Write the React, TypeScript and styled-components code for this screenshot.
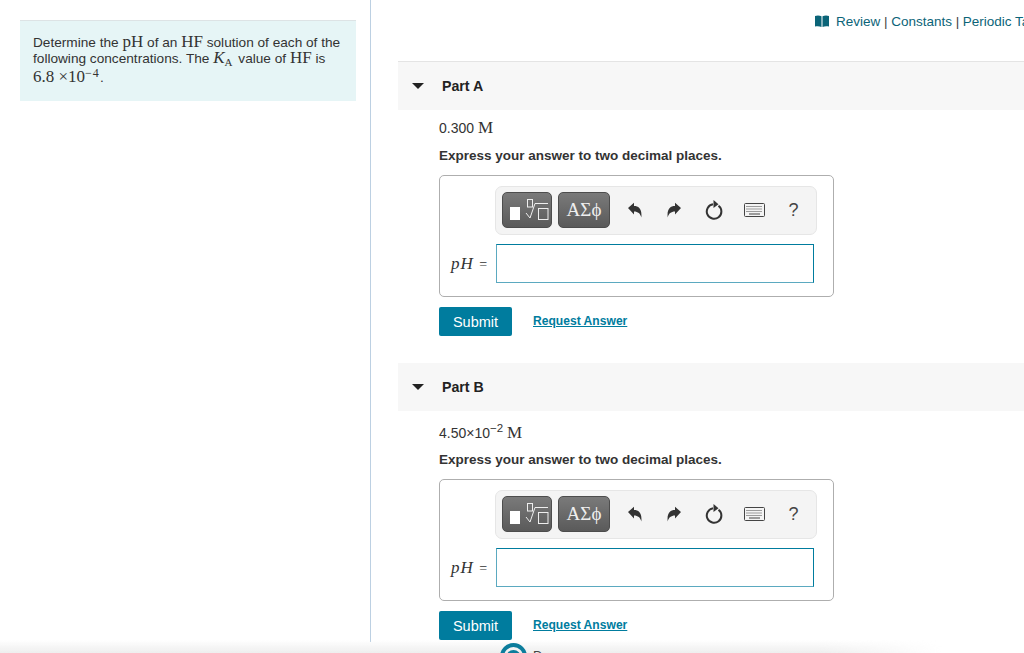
import React from "react";
import styled, { createGlobalStyle } from "styled-components";

const Global = createGlobalStyle`
  html, body { margin: 0; padding: 0; background: #fff; }
  body { font-family: "Liberation Sans", Arial, sans-serif; color: #333; overflow: hidden; }
`;
const Page = styled.div`
  position: relative;
  display: flex;
  width: 1024px;
  height: 653px;
  overflow: hidden;
`;
const LeftColumn = styled.aside`
  box-sizing: border-box;
  width: 371px;
  height: 642px;
  flex: none;
  padding: 20px 14px 0 20px;
  border-right: 1px solid #bcd0e2;
`;
const Intro = styled.div`
  box-sizing: border-box;
  height: 81px;
  padding: 14px 10px 0 13px;
  background: #e6f5f6;
  border-top: 1px solid #dde3e5;
  font-size: 13.65px;
  line-height: 16px;
`;
const IntroLine = styled.div<{ $gap?: number }>`
  height: 16px;
  white-space: nowrap;
  margin-top: ${(p) => p.$gap ?? 0}px;
`;
const Math = styled.span`
  font-family: "Liberation Serif", "Times New Roman", serif;
  font-size: 17px;
  line-height: 0;
`;
const MathItalic = styled(Math)`
  font-style: italic;
`;
const Sub = styled.sub`
  font-family: "Liberation Serif", serif;
  font-size: 11px;
  line-height: 0;
  vertical-align: -3px;
  margin-right: 2px;
`;
const Sup = styled.sup`
  font-family: "Liberation Serif", serif;
  font-size: 12px;
  line-height: 0;
  vertical-align: 5px;
  letter-spacing: 1px;
`;
const RightColumn = styled.main`
  flex: 1;
  min-width: 0;
  padding-left: 27px;
`;
const TopLinks = styled.nav`
  box-sizing: border-box;
  height: 61px;
  padding: 14px 0 0 417px;
  display: flex;
  align-items: flex-start;
  white-space: nowrap;
  font-size: 13.5px;
  line-height: 16px;
  color: #0b6478;
  overflow: hidden;
`;
const BookIcon = styled.svg`
  width: 14px;
  height: 12px;
  margin: 1px 7px 0 0;
  flex: none;
`;
const Divider = styled.span`
  color: #444;
  padding: 0 3.700px;
`;
const PartSection = styled.section<{ $first?: boolean }>`
  border-top: ${(p) => (p.$first ? "1px solid #e4e4e4" : "none")};
  margin-bottom: 27px;
`;
const PartHeader = styled.header`
  height: 48px;
  background: #f7f7f7;
  display: flex;
  align-items: center;
  padding-left: 14px;
  font-size: 14.2px;
  font-weight: 700;
  color: #222;
`;
const Caret = styled.span`
  width: 0;
  height: 0;
  border-left: 6px solid transparent;
  border-right: 6px solid transparent;
  border-top: 6px solid #222;
  margin-right: 18px;
`;
const PartBody = styled.div`
  padding-left: 41px;
`;
const Concentration = styled.div<{ $height: number; $pull: number }>`
  height: ${(p) => p.$height}px;
  margin-bottom: -${(p) => p.$pull}px;
  display: flex;
  align-items: flex-end;
  font-size: 14px;
  line-height: 20px;
  color: #333;
`;
const ConcentrationInner = styled.span`
  white-space: pre;
`;
const Exponent = styled.sup`
  font-size: 11.5px;
  line-height: 0;
  vertical-align: 6px;
`;
const Instruction = styled.p`
  margin: 0;
  padding-top: 9px;
  height: 27px;
  box-sizing: border-box;
  font-size: 13.5px;
  line-height: 18px;
  font-weight: 700;
  color: #333;
`;
const AnswerBox = styled.div`
  box-sizing: border-box;
  width: 395px;
  height: 122px;
  margin-top: 10px;
  padding: 10px 19px 0 11px;
  border: 1px solid #aeaeae;
  border-radius: 5px;
`;
const Toolbar = styled.div`
  box-sizing: border-box;
  width: 322px;
  height: 49px;
  margin-left: 44px;
  padding: 5px 0 0 6px;
  display: flex;
  align-items: flex-start;
  background: #f4f4f4;
  border: 1px solid #e6e6e6;
  border-radius: 7px;
`;
const TemplateButton = styled.div<{ $width: number }>`
  box-sizing: border-box;
  width: ${(p) => p.$width}px;
  height: 36px;
  margin-right: 6px;
  display: flex;
  align-items: center;
  justify-content: center;
  background: linear-gradient(#7a7a7a, #5a5a5a);
  border: 1px solid #4d4d4d;
  border-radius: 5px;
  color: #eee;
  font-family: "Liberation Serif", serif;
  font-size: 19px;
`;
const ToolIcon = styled.svg`
  display: block;
  flex: none;
`;
const ToolSlot = styled.div<{ $width: number }>`
  width: ${(p) => p.$width}px;
  height: 36px;
  display: flex;
  align-items: center;
  justify-content: center;
  flex: none;
  color: #333;
`;
const Question = styled.span`
  font-size: 18px;
  color: #444;
`;
const InputRow = styled.div`
  display: flex;
  align-items: center;
  margin-top: 9px;
`;
const InputLabel = styled.label`
  width: 45px;
  flex: none;
  font-family: "Liberation Serif", serif;
  font-size: 14px;
  color: #333;
  white-space: nowrap;
`;
const LabelItalic = styled.i`
  font-size: 17px;
  letter-spacing: 1px;
  margin-right: 2px;
`;
const AnswerInput = styled.div`
  box-sizing: border-box;
  width: 318px;
  height: 39px;
  background: #fff;
  border: 1px solid #5ba9c0;
  border-top-color: #007c9e;
  border-right-color: #007c9e;
`;
const Actions = styled.div`
  display: flex;
  align-items: center;
  margin-top: 10px;
`;
const SubmitButton = styled.button`
  box-sizing: border-box;
  width: 73px;
  height: 29px;
  padding: 0;
  background: #007c9e;
  border: 0;
  border-radius: 2px;
  color: #fff;
  font-family: inherit;
  font-size: 14.5px;
`;
const RequestLink = styled.a`
  margin: -2px 0 0 21px;
  font-size: 12.1px;
  font-weight: 700;
  color: #007c9e;
  text-decoration: underline;
`;
const BottomShade = styled.div`
  position: absolute;
  left: 0;
  right: 0;
  bottom: 0;
  height: 13px;
  background: linear-gradient(#efefef00, #eeeeee 100%);
  -webkit-mask-image: linear-gradient(90deg, #000 0, #000 80%, #0000 92%);
  mask-image: linear-gradient(90deg, #000 0, #000 80%, #0000 92%);
`;
const Badge = styled.div`
  position: absolute;
  left: 500px;
  top: 643px;
  width: 27px;
  height: 27px;
  box-sizing: border-box;
  border-radius: 50%;
  border: 4px solid #0c7d9c;
  &::after {
    content: "";
    position: absolute;
    left: 2px;
    top: 3px;
    width: 15px;
    height: 15px;
    box-sizing: border-box;
    border-radius: 50%;
    border: 3px solid #0c7d9c;
  }
`;
const BadgeLabel = styled.span`
  position: absolute;
  left: 533px;
  top: 648px;
  font-size: 13px;
  line-height: 15px;
  color: #444;
`;

const Undo = () => (
  <ToolIcon width="14" height="16" viewBox="0 0 14 16">
    <path d="M0 6 6 .8v3.300C10.500 4 14.300 7 13.300 15.500 12.300 11.500 10 9.600 6 9.500v3z" fill="#333" />
  </ToolIcon>
);
const Redo = () => (
  <ToolIcon width="14" height="16" viewBox="0 0 14 16">
    <path d="M14 6 8 .8v3.300C3.500 4-.3 7 .7 15.500 1.700 11.500 4 9.600 8 9.500v3z" fill="#333" />
  </ToolIcon>
);
const Reset = () => (
  <ToolIcon width="18" height="20" viewBox="0 0 18 20">
    <path d="M13.500 5.700A7.300 7.300 0 1 1 8 4.300" fill="none" stroke="#333" strokeWidth="2" />
    <path d="M8.500 0l5 4.300-5 3.700z" fill="#333" />
  </ToolIcon>
);
const Keyboard = () => (
  <ToolIcon width="21" height="14" viewBox="0 0 21 14">
    <rect x=".5" y=".5" width="20" height="13" rx="1" fill="#f4f4f4" stroke="#444" />
    <path d="M2.500 3.500h16M2.500 6h16M2.500 8.500h16" stroke="#444" strokeDasharray="1 1" />
    <path d="M5 11h11" stroke="#444" />
  </ToolIcon>
);
const TemplateGlyph = () => (
  <ToolIcon width="46" height="30" viewBox="0 0 46 30">
    <rect x="6" y="12" width="10" height="13" fill="#fff" />
    <rect x="23.500" y="4.500" width="5" height="7.500" fill="none" stroke="#eee" />
    <path d="M22 18l4 5 5-14.500h13" fill="none" stroke="#eee" />
    <rect x="34.500" y="13.500" width="9.500" height="11" fill="none" stroke="#eee" />
  </ToolIcon>
);

const Answer = () => (
  <AnswerBox>
    <Toolbar>
      <TemplateButton $width={50}><TemplateGlyph /></TemplateButton>
      <TemplateButton $width={52}>ΑΣϕ</TemplateButton>
      <ToolSlot $width={38}><Undo /></ToolSlot>
      <ToolSlot $width={40}><Redo /></ToolSlot>
      <ToolSlot $width={40}><Reset /></ToolSlot>
      <ToolSlot $width={40}><Keyboard /></ToolSlot>
      <ToolSlot $width={39}><Question>?</Question></ToolSlot>
    </Toolbar>
    <InputRow>
      <InputLabel><LabelItalic>pH</LabelItalic> =</InputLabel>
      <AnswerInput />
    </InputRow>
  </AnswerBox>
);

const Part = ({ name, first, height, pull = 0, children }: { name: string; first?: boolean; height: number; pull?: number; children: React.ReactNode }) => (
  <PartSection $first={first}>
    <PartHeader><Caret />{name}</PartHeader>
    <PartBody>
      <Concentration $height={height} $pull={pull}><ConcentrationInner>{children}</ConcentrationInner></Concentration>
      <Instruction>Express your answer to two decimal places.</Instruction>
      <Answer />
      <Actions>
        <SubmitButton>Submit</SubmitButton>
        <RequestLink>Request Answer</RequestLink>
      </Actions>
    </PartBody>
  </PartSection>
);

export default function App() {
  return (
    <Page>
      <Global />
      <LeftColumn>
        <Intro>
          <IntroLine>Determine the <Math>pH</Math> of an <Math>HF</Math> solution of each of the</IntroLine>
          <IntroLine>following concentrations. The <MathItalic>K</MathItalic><Sub>A</Sub> value of <Math>HF</Math> is</IntroLine>
          <IntroLine $gap={3}><Math>6.8 ×10</Math><Sup>−4</Sup>.</IntroLine>
        </Intro>
      </LeftColumn>
      <RightColumn>
        <TopLinks>
          <BookIcon viewBox="0 0 14 12">
            <path d="M0 1c2-.8 4.500-.8 6.500.3V12C4.500 11 2 11 0 11.500zM7.500 1.300C9.500.2 12 .2 14 1v10.500c-2-.5-4.500-.5-6.500.5z" fill="#0b6478" />
          </BookIcon>
          Review<Divider>|</Divider>Constants<Divider>|</Divider>Periodic Table
        </TopLinks>
        <Part name="Part A" first height={28}>0.300 <Math>M</Math></Part>
        <Part name="Part B" height={32} pull={1}>4.50×10<Exponent>−2</Exponent> <Math>M</Math></Part>
      </RightColumn>
      <BottomShade />
      <Badge />
      <BadgeLabel>D</BadgeLabel>
    </Page>
  );
}
